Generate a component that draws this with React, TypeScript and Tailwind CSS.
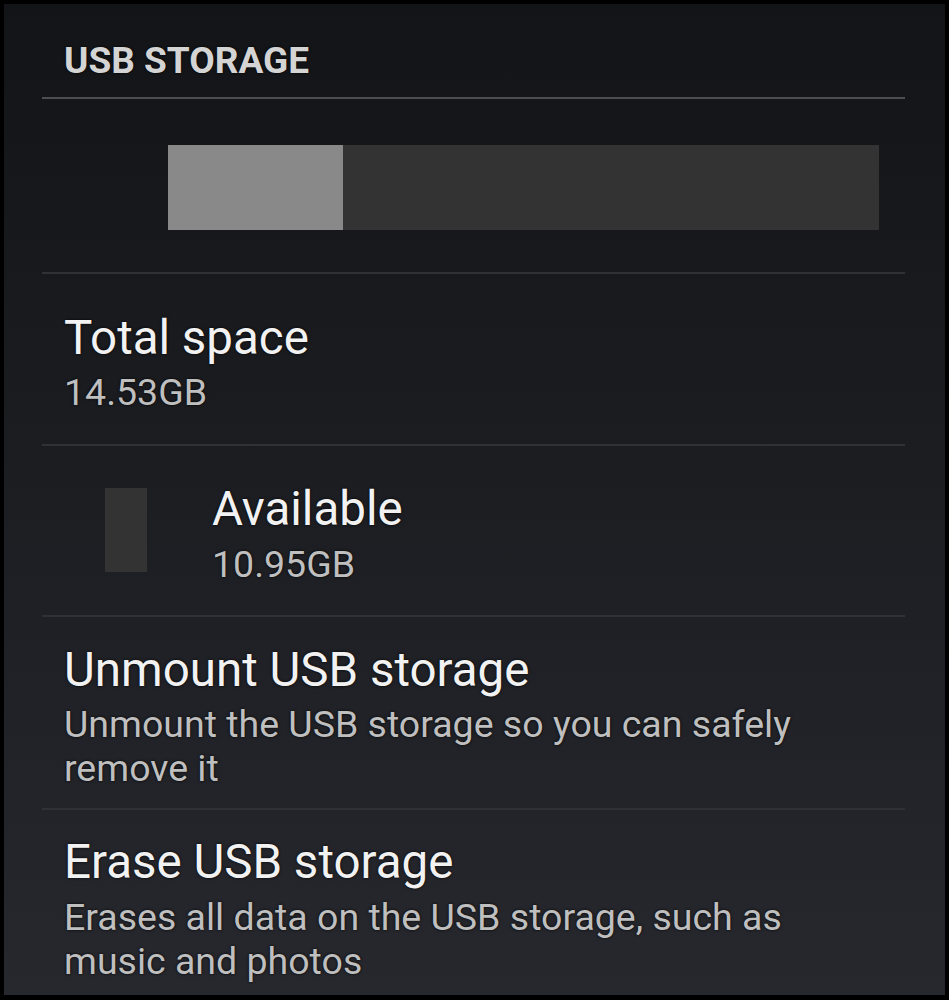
import React from 'react';

const shadow = "[text-shadow:0_0_3px_rgba(0,0,0,0.95)]";
const title = `text-[47.5px] leading-[56px] text-[#f2f2f2] ${shadow}`;
const sub = `text-[37.5px] leading-[44px] text-[#bfbfbf] max-w-[790px] ${shadow}`;

const Divider = ({ strong }: { strong?: boolean }) => (
  <div className={strong ? "h-[2px] bg-[#4b4d52]" : "h-[2px] bg-[#2f3136]"} />
);

export default function App() {
  return (
    <div className="w-[949px] h-[1000px] bg-black pt-[4px] pl-[4px] pr-[4px] pb-[5px]">
      <div className="h-full bg-linear-to-b from-[#131417] to-[#26282e] pl-[38px] pr-[40px] font-['Roboto','Noto_Sans',sans-serif]">
        {/* Header */}
        <div className={`pl-[22px] pt-[38px] text-[37px] leading-[37px] font-bold text-[#d4d4d4] ${shadow}`}>
          USB STORAGE
        </div>
        <div className="mt-[18px]">
          <Divider strong />
        </div>

        {/* Usage bar */}
        <div className="pt-[46px] pb-[42px] pl-[126px]">
          <div className="flex w-[711px] h-[85px] bg-[#333333]">
            <div className="w-[175px] h-full bg-[#898989]" />
          </div>
        </div>
        <Divider />

        {/* Total space */}
        <div className="pl-[22px] pt-[36px] pb-[30px]">
          <div className={title}>Total space</div>
          <div className={`mt-[4px] ${sub}`}>14.53GB</div>
        </div>
        <Divider />

        {/* Available */}
        <div className="pl-[22px] pt-[35px] pb-[29px] flex">
          <div className="ml-[41px] mt-[7px] w-[42px] h-[84px] bg-[#333333] shrink-0" />
          <div className="ml-[65px]">
            <div className={title}>Available</div>
            <div className={`mt-[5px] ${sub}`}>10.95GB</div>
          </div>
        </div>
        <Divider />

        {/* Unmount */}
        <div className="pl-[22px] pt-[25px] pb-[18px]">
          <div className={title}>Unmount USB storage</div>
          <div className={`mt-[4px] ${sub}`}>
            Unmount the USB storage so you can safely remove it
          </div>
        </div>
        <Divider />

        {/* Erase */}
        <div className="pl-[22px] pt-[24px]">
          <div className={title}>Erase USB storage</div>
          <div className={`mt-[5px] ${sub}`}>
            Erases all data on the USB storage, such as music and photos
          </div>
        </div>
      </div>
    </div>
  );
}
